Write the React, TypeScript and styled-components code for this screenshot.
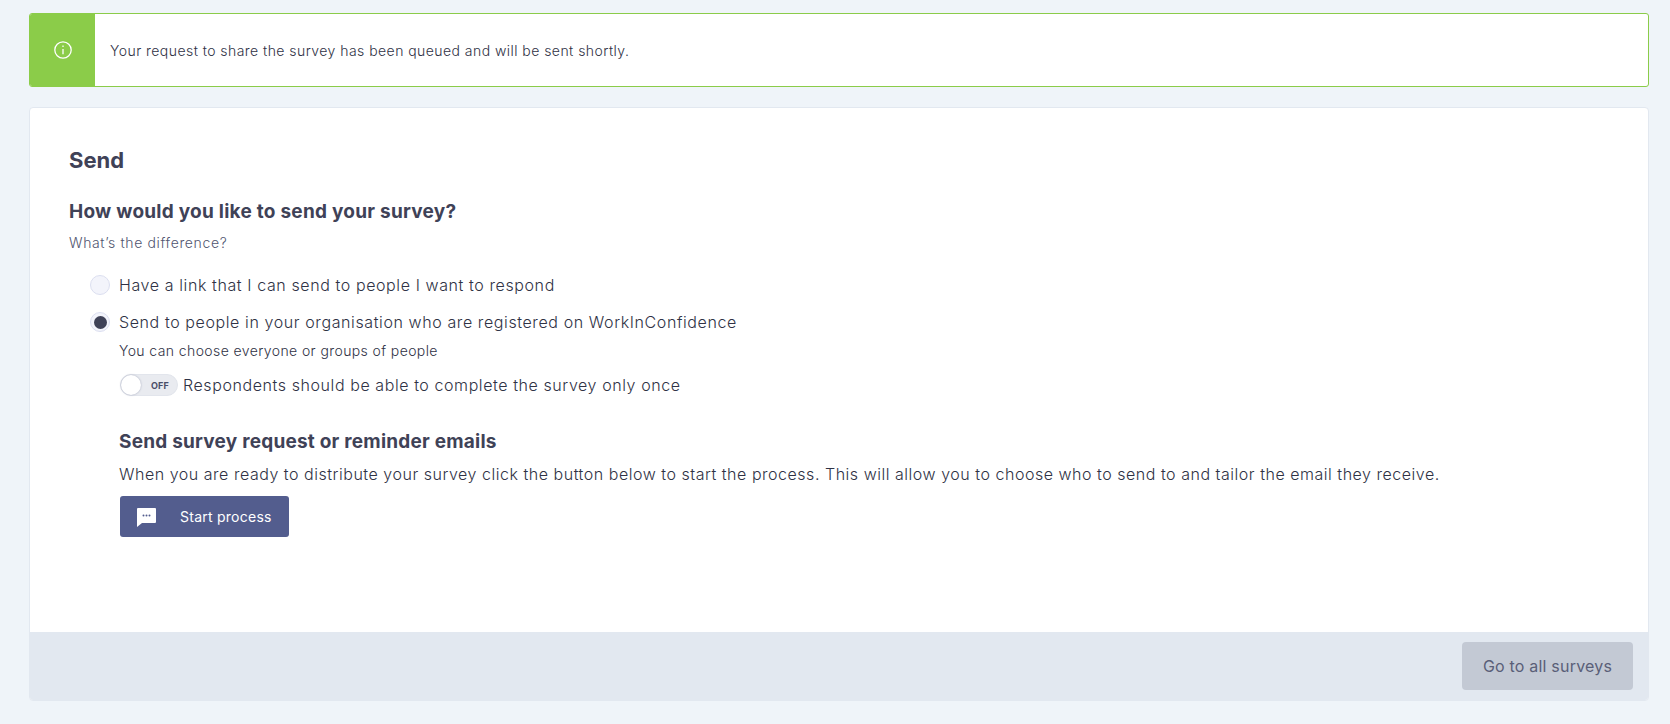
import React from "react";
import styled, { createGlobalStyle } from "styled-components";

const Global = createGlobalStyle`
  html, body { margin: 0; padding: 0; background: #eff4f9; }
  body { font-family: Inter, "Liberation Sans", sans-serif; color: #2f3245; }
`;
const Page = styled.div`
  display: flex; flex-direction: column; gap: 20px;
  padding: 13px 21px 0 29px; height: 724px; box-sizing: border-box;
`;
const Alert = styled.div`
  display: flex; height: 74px; box-sizing: border-box;
  border: 1px solid #8bcc49; border-radius: 3px; background: #fff; overflow: hidden;
`;
const AlertIcon = styled.div`
  width: 65px; background: #8bcc49; display: flex; align-items: center; justify-content: center; color: #fff;
`;
const AlertText = styled.div`
  display: flex; align-items: center; padding-left: 15px; font-size: 14px; letter-spacing: 0.45px; font-weight: 300; color: #2f3245;
`;
const Card = styled.div`
  display: flex; flex-direction: column; height: 594px; box-sizing: border-box;
  border: 1px solid #e2e8f0; border-radius: 4px; background: #fff; overflow: hidden;
`;
const Body = styled.div`
  flex: 1; padding: 39px 39px 0 39px; display: flex; flex-direction: column;
`;
const Title = styled.h1`
  margin: 0; font-size: 22px; line-height: 26px; font-weight: 700; color: #3f4257;
`;
const Question = styled.h2`
  margin: 27px 0 0; font-size: 19px; line-height: 24px; font-weight: 700; letter-spacing: 0.25px; color: #3f4257;
`;
const Hint = styled.div`
  margin-top: 10px; font-size: 14px; line-height: 18px; letter-spacing: 0.63px; font-weight: 300; color: #50556f;
`;
const Options = styled.div`
  margin: 22px 0 0 21px; display: flex; flex-direction: column;
`;
const OptionRow = styled.div<{ $gap?: number }>`
  display: flex; align-items: center; gap: 9px; height: 22px; font-size: 16px; letter-spacing: 0.6px; font-weight: 300;
  margin-top: ${p => p.$gap ?? 0}px;
`;
const Radio = styled.span<{ $on?: boolean }>`
  width: 20px; height: 20px; box-sizing: border-box; border-radius: 50%;
  border: 1px solid #dcdff0; background: #f3f4fb; display: flex; align-items: center; justify-content: center;
  &::after {
    content: ""; width: 13px; height: 13px; border-radius: 50%;
    background: ${p => (p.$on ? "#3f4257" : "transparent")};
  }
`;
const Nested = styled.div`
  margin-left: 30px; display: flex; flex-direction: column;
`;
const SmallNote = styled.div`
  margin-top: 9px; margin-left: -1px; font-size: 14px; line-height: 18px; letter-spacing: 0.4px; font-weight: 300;
`;
const ToggleRow = styled.div`
  margin-top: 14px; display: flex; align-items: center; gap: 5px; height: 22px;
  font-size: 16px; letter-spacing: 0.58px; font-weight: 300;
`;
const Toggle = styled.span`
  position: relative; width: 58px; height: 22px; border-radius: 11px; background: #e9ebf0;
  box-sizing: border-box; border: 1px solid #e2e5ec;
  display: flex; align-items: center; justify-content: flex-end; padding-right: 8px;
  font-size: 9px; font-weight: 700; color: #4a4e68; letter-spacing: 0.2px;
`;
const Knob = styled.span`
  position: absolute; left: 0; top: 0; width: 20px; height: 20px; border-radius: 50%;
  background: #fff; box-shadow: 0 0 2px rgba(70,80,120,.45);
`;
const SubTitle = styled.h3`
  margin: 34px 0 0 -1px; font-size: 19px; line-height: 24px; font-weight: 700; letter-spacing: 0.22px; color: #3f4257;
`;
const Paragraph = styled.p`
  margin: 9px 0 0 -1px; font-size: 16px; line-height: 22px; letter-spacing: 0.525px; font-weight: 300;
`;
const StartButton = styled.button`
  margin-top: 11px; width: 169px; height: 41px; border: 0; border-radius: 3px;
  background: #535d8e; color: #fff; font: inherit; font-size: 14px; letter-spacing: 0.25px;
  display: flex; align-items: center; padding: 0 0 0 16px; gap: 23px;
`;
const Footer = styled.div`
  height: 68px; background: #e2e8f0; display: flex; align-items: center; justify-content: flex-end;
  padding: 0 15px 0 0; box-sizing: border-box;
`;
const GoButton = styled.button`
  width: 171px; height: 48px; border: 0; border-radius: 4px; background: #c3c9d4;
  color: #5a5f78; font: inherit; font-size: 16px; letter-spacing: 0.2px;
`;

export default function App() {
  return (
    <>
      <Global />
      <Page>
        <Alert>
          <AlertIcon>
            <svg width="20" height="20" viewBox="0 0 20 20" fill="none" stroke="currentColor" strokeWidth="1.3">
              <circle cx="10" cy="10" r="8.2" />
              <path d="M10 9v5.2" />
              <path d="M10 5.6v1.5" />
            </svg>
          </AlertIcon>
          <AlertText>Your request to share the survey has been queued and will be sent shortly.</AlertText>
        </Alert>
        <Card>
          <Body>
            <Title>Send</Title>
            <Question>How would you like to send your survey?</Question>
            <Hint>What’s the difference?</Hint>
            <Options>
              <OptionRow><Radio />Have a link that I can send to people I want to respond</OptionRow>
              <OptionRow $gap={15}><Radio $on />Send to people in your organisation who are registered on WorkInConfidence</OptionRow>
              <Nested>
                <SmallNote>You can choose everyone or groups of people</SmallNote>
                <ToggleRow>
                  <Toggle><Knob />OFF</Toggle>
                  Respondents should be able to complete the survey only once
                </ToggleRow>
                <SubTitle>Send survey request or reminder emails</SubTitle>
                <Paragraph>When you are ready to distribute your survey click the button below to start the process. This will allow you to choose who to send to and tailor the email they receive.</Paragraph>
                <StartButton>
                  <svg width="21" height="20" viewBox="0 0 21 20">
                    <path fill="#fff" d="M2 1h17a1 1 0 0 1 1 1v13a1 1 0 0 1-1 1H6l-5 4V2a1 1 0 0 1 1-1z" />
                    <circle cx="7.5" cy="8.5" r="1" fill="#535d8e" />
                    <circle cx="10.5" cy="8.5" r="1" fill="#535d8e" />
                    <circle cx="13.5" cy="8.5" r="1" fill="#535d8e" />
                  </svg>
                  Start process
                </StartButton>
              </Nested>
            </Options>
          </Body>
          <Footer><GoButton>Go to all surveys</GoButton></Footer>
        </Card>
      </Page>
    </>
  );
}
